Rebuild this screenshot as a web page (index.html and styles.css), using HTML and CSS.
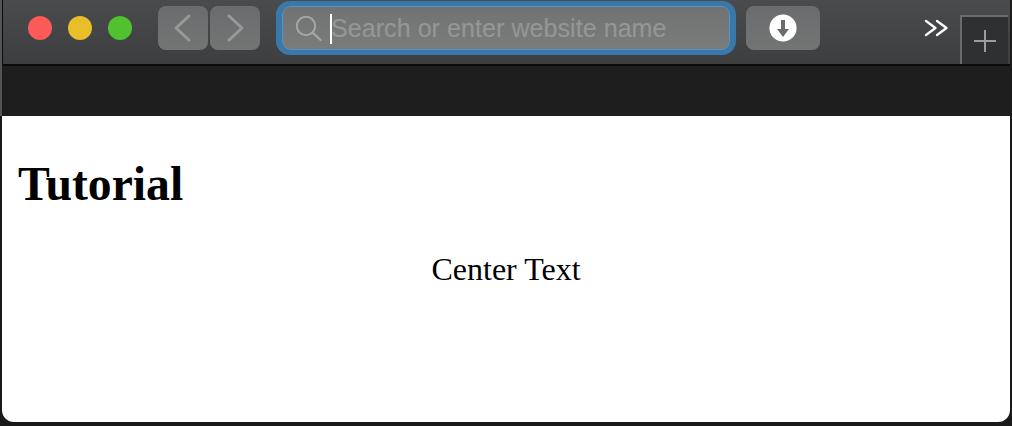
FILE: index.html
```html
<!DOCTYPE html>
<html lang="en">
<head>
<meta charset="utf-8">
<title>Tutorial</title>
<link rel="stylesheet" href="styles.css">
</head>
<body>
<div class="window">
  <header class="toolbar">
    <div class="lights">
      <span class="light red"></span>
      <span class="light yellow"></span>
      <span class="light green"></span>
    </div>
    <div class="nav">
      <button class="btn nav-btn" aria-label="Back">
        <svg width="50" height="44" viewBox="0 0 50 44"><path d="M31 10 L18 22 L31 34" fill="none" stroke="#979999" stroke-width="3" stroke-linecap="round" stroke-linejoin="round"/></svg>
      </button>
      <button class="btn nav-btn" aria-label="Forward">
        <svg width="50" height="44" viewBox="0 0 50 44"><path d="M19 10 L32 22 L19 34" fill="none" stroke="#979999" stroke-width="3" stroke-linecap="round" stroke-linejoin="round"/></svg>
      </button>
    </div>
    <div class="address">
      <svg class="search-icon" width="28" height="28" viewBox="0 0 28 28"><circle cx="11" cy="11" r="9.2" fill="none" stroke="#a5a7a7" stroke-width="2"/><path d="M17.6 17.6 L25.5 25" stroke="#a5a7a7" stroke-width="2.2" stroke-linecap="round"/></svg>
      <span class="caret"></span>
      <span class="placeholder">Search or enter website name</span>
    </div>
    <button class="btn download" aria-label="Downloads">
      <svg width="28" height="28" viewBox="0 0 28 28"><circle cx="14" cy="14" r="13.6" fill="#fff"/><path d="M12 6 H16 V15 H20 L14 23 L8 15 H12 Z" fill="#6a6b6b"/></svg>
    </button>
    <div class="overflow">
      <svg width="24" height="18" viewBox="0 0 24 18"><path d="M2 2 L11.5 9 L2 16 M13 2 L22.5 9 L13 16" fill="none" stroke="#fff" stroke-width="2.2" stroke-linecap="round" stroke-linejoin="round"/></svg>
    </div>
    <div class="new-tab">
      <svg width="24" height="24" viewBox="0 0 24 24"><path d="M12 1 V23 M1 12 H23" stroke="#9c9d9d" stroke-width="2"/></svg>
    </div>
  </header>
  <div class="favbar"></div>
  <main class="content">
    <h1 class="title">Tutorial</h1>
    <p class="center">Center Text</p>
  </main>
</div>
</body>
</html>
```
FILE: styles.css
```css
* { box-sizing: border-box; }
html, body { margin: 0; height: 100%; }
body { background: #1a1a1a; overflow: hidden; }
.window {
  width: 1012px;
  height: 426px;
  display: flex;
  flex-direction: column;
  padding: 0 2px 4px 2px;
  background: linear-gradient(#555, #555) 0 0 / 2px 116px no-repeat #1a1a1a;
}
.toolbar {
  height: 66px;
  flex: none;
  display: flex;
  align-items: flex-start;
  background: linear-gradient(#4a4b4d, #3d3e40);
  border-bottom: 2px solid #0c0c0c;
  border-left: 1px solid #0c0c0c;
}
.lights { display: flex; gap: 16px; margin: 16px 0 0 25px; }
.light { width: 24px; height: 24px; border-radius: 50%; }
.red { background: #fc5b57; }
.yellow { background: #e8bf2b; }
.green { background: #50c22f; }
.btn {
  border: 0;
  padding: 0;
  height: 44px;
  border-radius: 8px;
  background: linear-gradient(#6b6c6d, #737575);
  display: flex;
  align-items: center;
  justify-content: center;
}
.nav { display: flex; gap: 2px; margin: 6px 0 0 26px; }
.nav-btn { width: 50px; }
.address {
  width: 460px;
  height: 54px;
  margin: 1px 0 0 16px;
  border-style: solid;
  border-width: 5px 6px;
  border-color: #3878ab;
  border-radius: 14px;
  background: linear-gradient(#717272, #7a7c7b);
  display: flex;
  align-items: center;
  box-shadow: inset 0 0 0 1px #5b93c2;
}
.search-icon { margin: 2px 0 0 13px; flex: none; }
.caret { width: 2px; height: 30px; background: #fff; margin: 1px 0 0 7px; flex: none; }
.placeholder {
  font: 25px "Liberation Sans", Arial, sans-serif;
  letter-spacing: 0.07px;
  color: #949695;
  -webkit-text-stroke: 0.2px #949695;
  margin-left: -1px;
  white-space: nowrap;
}
.download { width: 74px; margin: 6px 0 0 10px; }
.overflow { margin: 19px 0 0 104px; height: 18px; line-height: 0; }
.new-tab {
  width: 48px;
  height: 49px;
  margin: 15px 0 0 12px;
  background: #2f3031;
  border-left: 2px solid #6a6b6c;
  border-top: 2px solid #6a6b6c;
  display: flex;
  align-items: center;
  justify-content: center;
}
.favbar { height: 50px; flex: none; margin-left: 1px; background: #1e1e1e; }
.content {
  flex: 1;
  background: #fff;
  border-radius: 0 0 12px 12px;
  padding: 0 16px;
  color: #000;
  font-family: "Liberation Serif", "Times New Roman", serif;
}
.title { font-size: 47.7px; font-weight: bold; line-height: 55px; margin: 40px 0 0; }
.center { font-size: 32px; line-height: 37px; margin: 40px 0 0; text-align: center; }
```
